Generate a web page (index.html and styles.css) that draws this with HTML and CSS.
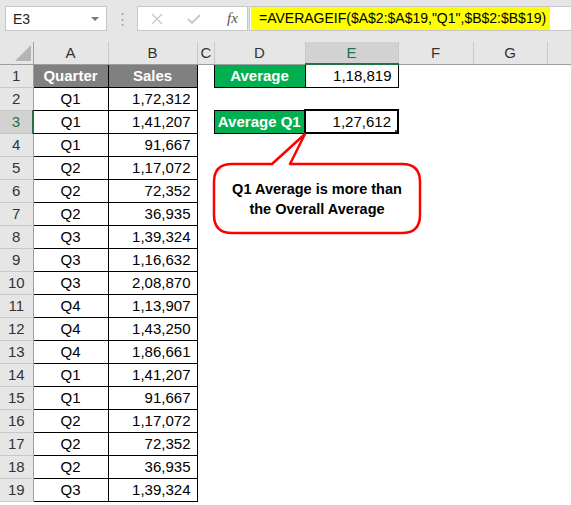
FILE: index.html
```html
<!DOCTYPE html>
<html lang="en">
<head>
    <meta charset="UTF-8">
    <title>AVERAGEIF</title>
    <link rel="stylesheet" href="styles.css">
</head>
<body>
    <div class="toolbar">
        <div class="name-box">
            <span>E3</span>
            <span class="drop"></span>
        </div>
        <div class="grip">⋮</div>
        <div class="fx-buttons">
            <svg width="12" height="12" viewBox="0 0 12 12"><path d="M1 1 L11 11 M11 1 L1 11" stroke="#c8c8c8" stroke-width="1.4" fill="none"/></svg>
            <svg width="14" height="12" viewBox="0 0 14 12"><path d="M1 6 L5 10 L13 2" stroke="#c8c8c8" stroke-width="1.8" fill="none"/></svg>
            <span class="fx">fx</span>
        </div>
        <div class="formula">
            <span class="formula-text">=AVERAGEIF($A$2:$A$19,"Q1",$B$2:$B$19)</span>
        </div>
    </div>

    <div class="sheet-wrap">
        <table class="sheet">
            <colgroup>
                <col style="width:33px"><col style="width:75px"><col style="width:89px">
                <col style="width:17px"><col style="width:91px"><col style="width:93px">
                <col style="width:75px"><col style="width:74px"><col style="width:24px">
            </colgroup>
            <tr class="col-head">
                <th class="corner"><span class="tri"></span></th>
                <th>A</th><th>B</th><th>C</th><th>D</th><th class="sel">E</th><th>F</th><th>G</th><th></th>
            </tr>
            <tbody id="rows"></tbody>
        </table>

        <div class="callout">
            <svg width="571" height="140" viewBox="0 0 571 140">
                <path d="M232 58 L272 58 L305 28 L290 58 L402 58 Q420 58 420 76 L420 109 Q420 127 402 127 L232 127 Q214 127 214 109 L214 76 Q214 58 232 58 Z"
                      fill="#fff" stroke="#ff0000" stroke-width="2.5" stroke-linejoin="round"/>
            </svg>
            <div class="callout-text">Q1 Average is more than<br>the Overall Average</div>
        </div>
    </div>

    <script>
        const data = [
            ['Q1', '1,72,312'], ['Q1', '1,41,207'], ['Q1', '91,667'], ['Q2', '1,17,072'],
            ['Q2', '72,352'], ['Q2', '36,935'], ['Q3', '1,39,324'], ['Q3', '1,16,632'],
            ['Q3', '2,08,870'], ['Q4', '1,13,907'], ['Q4', '1,43,250'], ['Q4', '1,86,661'],
            ['Q1', '1,41,207'], ['Q1', '91,667'], ['Q2', '1,17,072'], ['Q2', '72,352'],
            ['Q2', '36,935'], ['Q3', '1,39,324']
        ];

        const rows = document.getElementById('rows');
        let html = '<tr><th class="row-head">1</th><td class="hdr">Quarter</td><td class="hdr">Sales</td>' +
            '<td></td><td class="label">Average</td><td class="num boxed">1,18,819</td><td></td><td></td><td></td></tr>';

        data.forEach((row, i) => {
            const n = i + 2;
            let d = '<td></td>', e = '<td></td>';
            if (n === 3) {
                d = '<td class="label">Average Q1</td>';
                e = '<td class="num active">1,27,612<span class="handle"></span></td>';
            }
            html += `<tr><th class="row-head${n === 3 ? ' sel' : ''}">${n}</th>` +
                `<td class="cell center">${row[0]}</td><td class="cell num">${row[1]}</td>` +
                `<td></td>${d}${e}<td></td><td></td><td></td></tr>`;
        });

        rows.innerHTML = html;
    </script>
</body>
</html>
```

FILE: styles.css
```css
* {
    box-sizing: border-box;
    margin: 0;
    padding: 0;
}

body {
    width: 571px;
    height: 505px;
    overflow: hidden;
    background: #fff;
    font-family: 'Liberation Sans', Arial, sans-serif;
    color: #000;
}

.toolbar {
    height: 42px;
    background: #e6e6e6;
    display: flex;
    align-items: flex-start;
    padding-top: 6px;
    padding-left: 5px;
}

.name-box {
    width: 102px;
    height: 25px;
    background: #fff;
    border: 1px solid #c6c6c6;
    display: flex;
    align-items: center;
    justify-content: space-between;
    padding: 0 7px 0 7px;
    font-size: 14px;
    color: #222;
}

.drop {
    width: 0;
    height: 0;
    border-left: 4px solid transparent;
    border-right: 4px solid transparent;
    border-top: 4px solid #777;
}

.grip {
    width: 30px;
    text-align: center;
    color: #a6a6a6;
    font-size: 15px;
    line-height: 25px;
}

.fx-buttons {
    width: 111px;
    height: 25px;
    background: #fff;
    border: 1px solid #c6c6c6;
    display: flex;
    align-items: center;
    gap: 24px;
    padding-left: 13px;
}

.fx {
    font-family: 'Liberation Serif', serif;
    font-style: italic;
    font-size: 15px;
    color: #555;
    margin-left: 2px;
}

.formula {
    flex: 1;
    height: 25px;
    margin-left: 1px;
    background: #fff;
    border: 1px solid #c6c6c6;
    border-right: none;
    padding-left: 1px;
}

.formula-text {
    display: inline-block;
    height: 23px;
    line-height: 23px;
    width: 299px;
    background: #ffff00;
    padding-left: 8px;
    font-size: 14px;
    color: #000;
    white-space: nowrap;
}

.sheet-wrap {
    position: relative;
}

.sheet {
    border-collapse: collapse;
    table-layout: fixed;
    width: 571px;
    font-size: 15px;
}

.sheet th,
.sheet td {
    height: 23px;
    padding: 0 3px;
    white-space: nowrap;
    overflow: hidden;
    font-weight: normal;
}

.col-head th {
    height: 22px;
    background: #e6e6e6;
    border-left: 1px solid #c8c8c8;
    border-bottom: 1px solid #9e9e9e;
    color: #333;
    text-align: center;
    font-size: 15px;
}

.col-head th.corner {
    border-left: none;
    border-right: 1px solid #9e9e9e;
    position: relative;
}

.tri {
    position: absolute;
    right: 2px;
    bottom: 3px;
    width: 0;
    height: 0;
    border-left: 16px solid transparent;
    border-bottom: 16px solid #b4b4b4;
}

.col-head th.sel {
    background: #d2d2d2;
    color: #217346;
    border-bottom: 2px solid #217346;
}

.sheet .row-head {
    background: #e6e6e6;
    border-right: 1px solid #9e9e9e;
    border-bottom: 1px solid #c8c8c8;
    color: #333;
    text-align: center;
}

.sheet .row-head.sel {
    background: #d2d2d2;
    color: #217346;
    border-right: 2px solid #217346;
}

.sheet .cell,
.sheet .hdr {
    border: 1px solid #000;
}

.center {
    text-align: center;
}

.sheet .num {
    text-align: right;
    padding-right: 6px;
}

.sheet .hdr {
    background: #808080;
    color: #fff;
    font-weight: bold;
    text-align: center;
}

.sheet .label {
    background: #00b050;
    color: #fff;
    font-weight: bold;
    text-align: center;
    border: 1px solid #000;
    padding: 0 1px;
}

.sheet .boxed {
    border: 1px solid #000;
}

.sheet .active {
    border: 2px solid #000;
    position: relative;
}

.handle {
    position: absolute;
    right: -2px;
    bottom: -2px;
    width: 4px;
    height: 4px;
    background: #217346;
}

.callout {
    position: absolute;
    left: 0;
    top: 64px;
    width: 571px;
    height: 140px;
    pointer-events: none;
}

.callout svg {
    position: absolute;
    left: 0;
    top: 0;
}

.callout-text {
    position: absolute;
    left: 214px;
    top: 59px;
    width: 206px;
    height: 67px;
    display: flex;
    align-items: center;
    justify-content: center;
    text-align: center;
    font-weight: bold;
    font-size: 14.5px;
    line-height: 20px;
}
```
